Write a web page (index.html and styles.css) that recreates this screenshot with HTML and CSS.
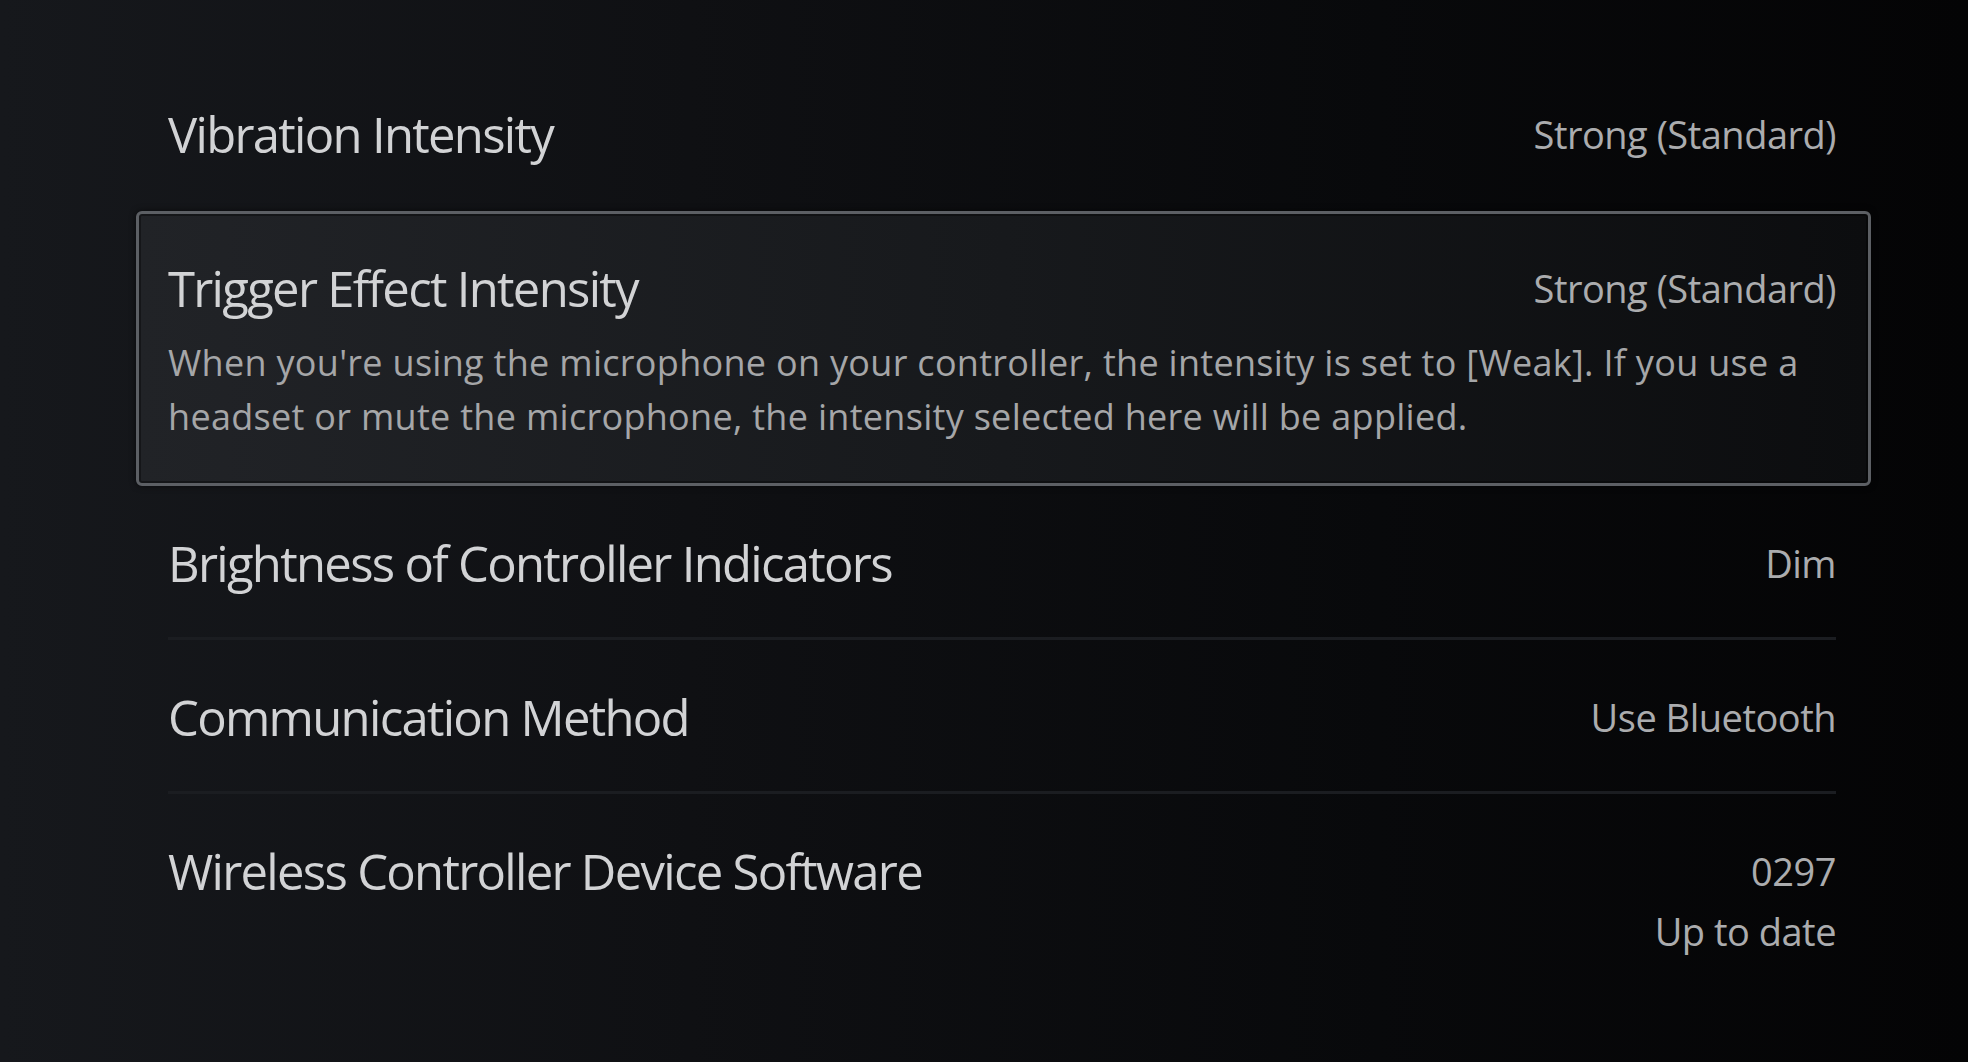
FILE: index.html
```html
<!DOCTYPE html>
<html lang="en">
<head>
    <meta charset="UTF-8">
    <meta name="viewport" content="width=device-width, initial-scale=1.0">
    <title>Controller Settings</title>
    <link rel="stylesheet" href="styles.css">
</head>
<body>

    <!-- Lista de configurações do controle -->
    <div class="settings-list">
        <div class="row no-line">
            <span class="label">Vibration Intensity</span>
            <span class="value">Strong (Standard)</span>
        </div>

        <!-- Item selecionado -->
        <div class="row focused">
            <div class="row-head">
                <span class="label">Trigger Effect Intensity</span>
                <span class="value">Strong (Standard)</span>
            </div>
            <p class="desc">When you're using the microphone on your controller, the intensity is set to [Weak]. If you use a<br>headset or mute the microphone, the intensity selected here will be applied.</p>
        </div>

        <div class="row">
            <span class="label">Brightness of Controller Indicators</span>
            <span class="value">Dim</span>
        </div>

        <div class="row">
            <span class="label">Communication Method</span>
            <span class="value">Use Bluetooth</span>
        </div>

        <div class="row no-line">
            <span class="label">Wireless Controller Device Software</span>
            <div class="value">
                <div>0297</div>
                <div>Up to date</div>
            </div>
        </div>
    </div>

</body>
</html>
```

FILE: styles.css
```css
body {
    margin: 0;
    height: 1062px;
    overflow: hidden;
    font-family: "Open Sans", "Noto Sans", sans-serif;
    background: linear-gradient(90deg, #16181c 0%, #0f1013 35%, #08090b 70%, #040405 100%);
}

.settings-list {
    width: 1668px;
    margin-left: 168px;
    padding-top: 57px;
}

.row {
    display: flex;
    justify-content: space-between;
    align-items: flex-start;
    box-sizing: border-box;
    height: 154px;
    padding-top: 47px;
    border-bottom: 3px solid #1b1d21;
}

.no-line {
    border-bottom: none;
}

.label {
    font-size: 49px;
    line-height: 60px;
    letter-spacing: -1.7px;
    color: #d2d3d5;
}

.value {
    font-size: 38px;
    line-height: 60px;
    letter-spacing: -0.5px;
    color: #abacae;
    text-align: right;
}

/* item com foco */
.row.focused {
    display: block;
    height: auto;
    margin: 0 -35px 0 -32px;
    padding: 44px 32px 39px 29px;
    border: 3px solid #5c5f64;
    border-radius: 6px;
    background: linear-gradient(90deg, #212327 0%, #17191c 50%, #0c0d0f 100%);
    box-shadow: inset 0 0 0 2px rgba(0, 0, 0, 0.35), 0 0 6px rgba(0, 0, 0, 0.6);
}

.row-head {
    display: flex;
    justify-content: space-between;
}

.desc {
    margin: 18px 0 0;
    font-size: 36px;
    line-height: 54px;
    letter-spacing: 0.3px;
    color: #a5a6a8;
}
```
